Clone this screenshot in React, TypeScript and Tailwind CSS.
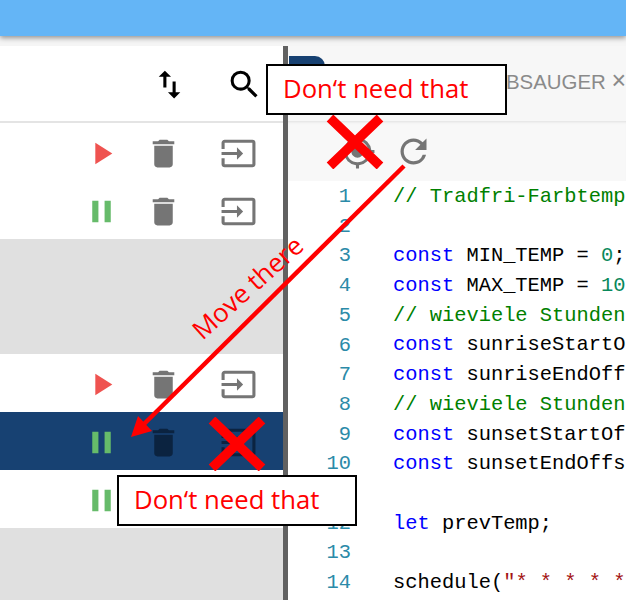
import { MdImportExport, MdSearch, MdDelete, MdInput, MdPlayArrow, MdPause, MdRefresh, MdGpsFixed } from "react-icons/md";

const rows = [
  { kind: "play" },
  { kind: "pause" },
  { kind: "gap", h: "h-[115px]" },
  { kind: "play" },
  { kind: "pause", selected: true },
  { kind: "pause" },
];

function Row({ kind, selected }: { kind: string; selected?: boolean }) {
  const gray = selected ? "text-[#0b2340]" : "text-[#757575]";
  return (
    <div className={`flex h-[58px] items-center pl-[83px] pt-[2px] ${selected ? "bg-[#174172]" : "bg-white"}`}>
      {kind === "play" ? (
        <MdPlayArrow size={37} className="text-[#ef5350]" />
      ) : (
        <MdPause size={37} className="text-[#66bb6a]" />
      )}
      <MdDelete size={37} className={`ml-[25px] ${gray}`} />
      <MdInput size={37} className={`ml-[38px] ${gray}`} />
    </div>
  );
}

const K = ({ children }: { children: React.ReactNode }) => <span className="text-[#0000ff]">{children}</span>;
const C = ({ children }: { children: React.ReactNode }) => <span className="text-[#008000]">{children}</span>;
const N = ({ children }: { children: React.ReactNode }) => <span className="text-[#09885a]">{children}</span>;

// the editor is cut by the window edge, only the visible part of each line is kept
const code: React.ReactNode[] = [
  <C>// Tradfri-Farbtemp</C>,
  "",
  <><K>const</K> MIN_TEMP = <N>0</N>;</>,
  <><K>const</K> MAX_TEMP = <N>10</N></>,
  <C>// wieviele Stunden</C>,
  <><K>const</K> sunriseStartO</>,
  <><K>const</K> sunriseEndOff</>,
  <C>// wieviele Stunden</C>,
  <><K>const</K> sunsetStartOf</>,
  <><K>const</K> sunsetEndOffs</>,
  "",
  <><K>let</K> prevTemp;</>,
  "",
  <>schedule(<span className="text-[#a31515]">"* * * * *</span></>,
];

function Callout({ className }: { className: string }) {
  return (
    <div
      className={`absolute flex h-[51px] items-center border-2 border-black bg-white pl-[15px] text-[25.7px] text-[#ff0000] [font-family:'Open_Sans',sans-serif] ${className}`}
    >
      Don‘t need that
    </div>
  );
}

function Cross({ className }: { className: string }) {
  return (
    <svg width="58" height="54" viewBox="0 0 58 54" className={`absolute ${className}`}>
      <path d="M4 3L54 51M54 3L4 51" stroke="#ff0000" strokeWidth="9.5" fill="none" />
    </svg>
  );
}

export default function App() {
  return (
    <div className="relative flex h-[600px] w-[626px] flex-col overflow-hidden bg-[#f5f5f5] [font-family:'Liberation_Sans',sans-serif]">
      <div className="relative z-10 h-[36px] shrink-0 bg-[#64b5f6] shadow-[0_2px_5px_rgba(0,0,0,0.4)]" />
      <div className="flex flex-1 pt-[10px]">
        <div className="flex w-[283px] flex-col bg-[#e0e0e0]">
          <div className="flex h-[77px] shrink-0 items-center border-b-2 border-[#e4e4e4] bg-white pl-[151px] pt-[1px]">
            <MdImportExport size={37} className="text-black" />
            <MdSearch size={37} className="ml-[38px] text-black" />
          </div>
          {rows.map((r, i) =>
            r.kind === "gap" ? (
              <div key={i} className={r.h} />
            ) : (
              <Row key={i} kind={r.kind} selected={r.selected} />
            ),
          )}
        </div>
        <div className="w-[5px] bg-[#616161]" />
        <div className="flex flex-1 flex-col overflow-hidden bg-white">
          <div className="flex h-[75px] shrink-0 items-start bg-[#f7f7f7] pt-[10px]">
            <div className="ml-[1px] h-[50px] w-[36px] rounded-tr-[10px] bg-[#174172]" />
            <div className="ml-[181px] mt-[12px] whitespace-nowrap text-[20.4px] leading-[24px] text-[#8a8a8a]">
              BSAUGER <span className="text-[25px] leading-[24px]">×</span>
            </div>
          </div>
          <div className="flex h-[60px] shrink-0 items-center bg-[#f8f8f8] pl-[51px] text-[#757575] shadow-[inset_0_3px_3px_-2px_rgba(0,0,0,0.1)]">
            <MdGpsFixed size={37} />
            <MdRefresh size={39} className="ml-[18px]" />
          </div>
          <div className="flex pt-[1px] text-[20.4px] leading-[29.7px] [font-family:'Liberation_Mono',monospace]">
            <div className="w-[63px] shrink-0 text-right text-[#2b8aa8]">
              {code.map((_, i) => (
                <div key={i}>{i + 1}</div>
              ))}
            </div>
            <div className="ml-[42px] whitespace-pre text-black">
              {code.map((line, i) => (
                <div key={i} className="h-[29.7px]">{line}</div>
              ))}
            </div>
          </div>
        </div>
      </div>

      <Callout className="left-[266px] top-[64px] w-[241px]" />
      <Callout className="left-[117px] top-[475px] w-[240px]" />
      <Cross className="left-[326px] top-[115px]" />
      <Cross className="left-[208px] top-[417px]" />
      <svg width="626" height="600" viewBox="0 0 626 600" className="absolute left-0 top-0">
        <path d="M404 166L140 428" stroke="#ff0000" strokeWidth="4.5" fill="none" />
        <path d="M131 437L138 416L152 431Z" fill="#ff0000" />
      </svg>
      <div className="absolute left-[179px] top-[273px] w-[130px] -rotate-[42deg] whitespace-nowrap text-center text-[26px] leading-[34px] text-[#ff0000] [font-family:'Open_Sans',sans-serif]">
        Move there
      </div>
    </div>
  );
}
